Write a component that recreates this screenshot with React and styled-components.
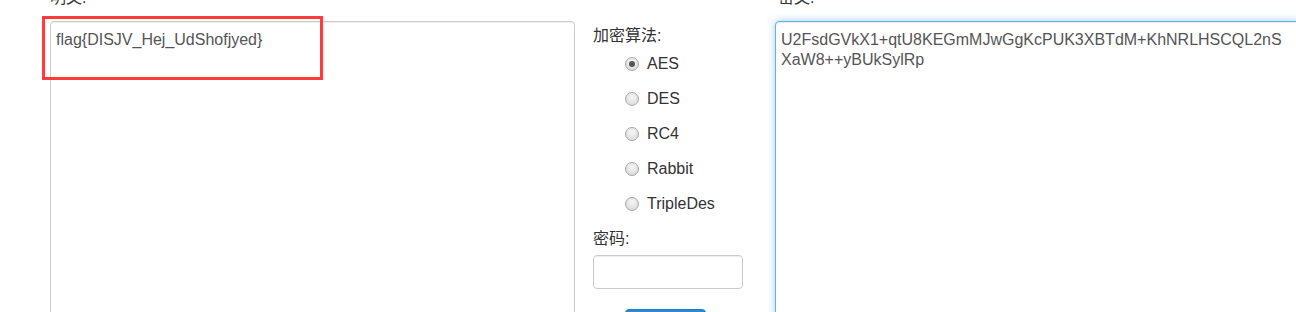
import React from "react";
import styled, { createGlobalStyle } from "styled-components";

const Global = createGlobalStyle`
  html, body {
    margin: 0;
    padding: 0;
    overflow: hidden;
    background: #fff;
  }
  body {
    font-family: "Liberation Sans", Arial, "Noto Sans CJK SC", sans-serif;
    font-size: 16px;
    line-height: 20px;
    color: #333;
  }
`;

// PAGINA
const Pagina = styled.div`
  display: flex;
  align-items: flex-start;
  padding-left: 50px;
  width: 1400px;
`;

// COLUMNAS TEXTO
const ColumnaTexto = styled.div`
  position: relative;
  width: 525px;
  flex: none;
  margin-top: -12px;
`;

const Etiqueta = styled.label`
  display: block;
  height: 20px;
  margin-bottom: ${(p) => p.$abajo || 0}px;
  margin-left: ${(p) => p.$izq || 0}px;
  color: #333;
`;

const AreaTexto = styled.textarea`
  display: block;
  box-sizing: border-box;
  width: 525px;
  height: 300px;
  margin: 0;
  padding: 8px 5px;
  border: 1px solid ${(p) => (p.$foco ? "#66afe9" : "#ccc")};
  border-radius: 4px;
  font-family: "Liberation Sans", Arial, sans-serif;
  font-size: 16px;
  line-height: 20px;
  color: #555;
  resize: none;
  overflow: hidden;
  white-space: pre;
  outline: none;
  box-shadow: ${(p) =>
    p.$foco
      ? "inset 0 1px 1px rgba(0,0,0,.075), 0 0 8px rgba(102,175,233,.6)"
      : "inset 0 1px 1px rgba(0,0,0,.075)"};
`;

// MARCO ROJO ENCIMA
const MarcoRojo = styled.div`
  position: absolute;
  left: -8px;
  top: 28px;
  width: 281px;
  height: 64px;
  box-sizing: border-box;
  border: 3px solid #ff3b3b;
  pointer-events: none;
`;

// COLUMNA CENTRO
const ColumnaCentro = styled.div`
  flex: none;
  width: 150px;
  margin-left: 18px;
  padding-top: 26px;
  display: flex;
  flex-direction: column;
`;

const ListaRadios = styled.div`
  display: flex;
  flex-direction: column;
  padding-left: 32px;
  margin-bottom: 8px;
`;

const FilaRadio = styled.label`
  display: flex;
  align-items: center;
  gap: 8px;
  height: 35px;
  color: #333;
  font-size: 16px;
`;

const Circulo = styled.span`
  width: 14px;
  height: 14px;
  box-sizing: border-box;
  border-radius: 50%;
  border: 1px solid #a8a8a8;
  background: radial-gradient(circle at 50% 35%, #f6f6f6 0%, #dedede 70%, #d0d0d0 100%);
  display: flex;
  align-items: center;
  justify-content: center;
  flex: none;

  &::after {
    content: "";
    display: ${(p) => (p.$activo ? "block" : "none")};
    width: 6px;
    height: 6px;
    border-radius: 50%;
    background: #555;
  }
`;

const CampoClave = styled.input`
  box-sizing: border-box;
  width: 150px;
  height: 34px;
  margin-top: 6px;
  border: 1px solid #ccc;
  border-radius: 4px;
  box-shadow: inset 0 1px 1px rgba(0, 0, 0, 0.075);
  outline: none;
  padding: 6px 12px;
`;

const Boton = styled.button`
  align-self: flex-start;
  margin-left: 32px;
  margin-top: 20px;
  width: 81px;
  height: 34px;
  border: 1px solid #1f7dc4;
  border-radius: 4px;
  background: #2b8ad6;
  color: #fff;
  font-family: "Liberation Sans", "Noto Sans CJK SC", sans-serif;
  font-size: 14px;
`;

const ColumnaDerecha = styled(ColumnaTexto)`
  margin-left: 32px;
`;

const algoritmos = ["AES", "DES", "RC4", "Rabbit", "TripleDes"];

const App = () => {
  return (
    <>
      <Global />
      <Pagina>
        <ColumnaTexto>
          <Etiqueta $abajo={13}>明文:</Etiqueta>
          <AreaTexto readOnly value="flag{DISJV_Hej_UdShofjyed}" />
          <MarcoRojo />
        </ColumnaTexto>

        <ColumnaCentro>
          <Etiqueta>加密算法:</Etiqueta>
          <ListaRadios>
            {algoritmos.map((a, i) => (
              <FilaRadio key={a}>
                <Circulo $activo={i === 0} />
                {a}
              </FilaRadio>
            ))}
          </ListaRadios>
          <Etiqueta>密码:</Etiqueta>
          <CampoClave type="text" />
          <Boton>加密</Boton>
        </ColumnaCentro>

        <ColumnaDerecha>
          <Etiqueta $abajo={13} $izq={3}>密文:</Etiqueta>
          <AreaTexto
            $foco
            readOnly
            value={"U2FsdGVkX1+qtU8KEGmMJwGgKcPUK3XBTdM+KhNRLHSCQL2nS\nXaW8++yBUkSylRp"}
          />
        </ColumnaDerecha>
      </Pagina>
    </>
  );
};

export default App;
